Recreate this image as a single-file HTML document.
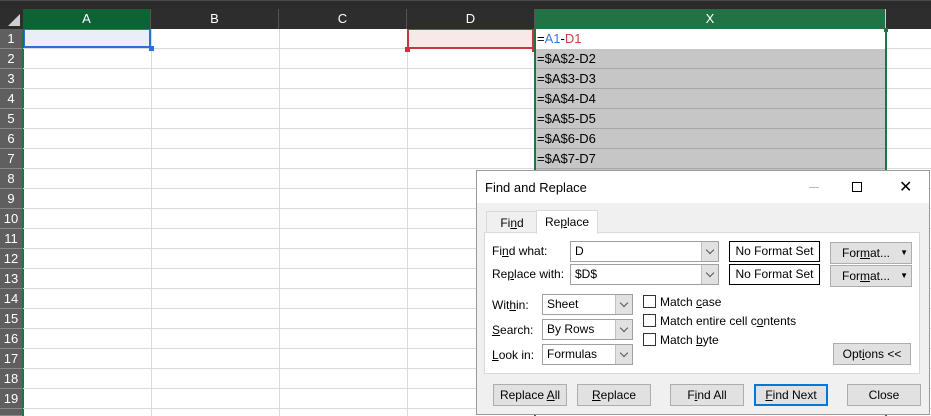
<!DOCTYPE html>
<html style="width:931px;height:416px;overflow:hidden"><head><style>
*{margin:0;padding:0;box-sizing:border-box}
body{width:931px;height:416px;overflow:hidden;background:#fff;font-family:"Liberation Sans","Noto Sans CJK SC",sans-serif;position:relative}
.a{position:absolute}
.topbar{left:0;top:0;width:931px;height:9px;background:#2b2b2b;border-top:1px solid #4a4a4a}
.colh{top:9px;height:20px;background:#2d2d2d;color:#fff;font-size:13px;text-align:center;line-height:20px;border-right:1px solid #555}
.rowh{left:0;width:22px;height:20px;background:#5f5f5f;color:#fff;font-size:13px;text-align:center;line-height:20px;border-bottom:1px solid #888}
.hl{left:23px;width:908px;height:1px;background:#dadada}
.vl{top:29px;width:1px;height:387px;background:#dadada}
.xc{left:536px;width:350px;height:20px;background:#c6c6c6;border-bottom:1px solid #a8a8a8;font-size:13px;line-height:20px;padding-left:1px;color:#000}
.dlg{left:476px;top:170px;width:454px;height:245px;background:#f0f0f0;border:1px solid #999;font-size:12px;color:#000}
.lbl{font-size:12px}
.inp{background:#fff;border:1px solid #a0a0a0;height:21px;line-height:19px;padding-left:4px;font-size:12px}
.dd{position:absolute;right:0;top:0;width:17px;height:19px;background:#e1e1e1;border-left:1px solid #c0c0c0}
.dd:after{content:"";position:absolute;left:5px;top:5px;width:5px;height:5px;border-right:1px solid #555;border-bottom:1px solid #555;transform:rotate(45deg)}
.btn{background:#e1e1e1;border:1px solid #adadad;height:22px;text-align:center;line-height:20px;font-size:12px}
.nf{background:#fff;border:1px solid #000;height:21px;text-align:center;line-height:19px;font-size:12px}
.cb{width:13px;height:13px;border:1px solid #333;background:#fff}
u{text-decoration:underline}
</style></head><body>
<div class="a topbar"></div>
<div class="a" style="left:0;top:9px;width:23px;height:20px;background:#2d2d2d"></div>
<div class="a" style="left:8px;top:14px;width:0;height:0;border-left:12px solid transparent;border-bottom:12px solid #cfcfcf"></div>
<div class="a colh" style="left:23px;width:128px;background:#0e6335">A</div>
<div class="a colh" style="left:151px;width:128px">B</div>
<div class="a colh" style="left:279px;width:128px">C</div>
<div class="a colh" style="left:407px;width:128px">D</div>
<div class="a colh" style="left:535px;width:351px;background:#217346;border-right:1px solid #ccc">X</div>
<div class="a colh" style="left:886px;width:45px;border:none"></div>

<div class="a" style="left:0;top:29px;width:23px;height:387px;background:#5f5f5f"></div>
<div class="a" style="left:22px;top:29px;width:2px;height:387px;background:#217346"></div>
<div class="a rowh" style="top:29px">1</div><div class="a rowh" style="top:49px">2</div><div class="a rowh" style="top:69px">3</div><div class="a rowh" style="top:89px">4</div><div class="a rowh" style="top:109px">5</div><div class="a rowh" style="top:129px">6</div><div class="a rowh" style="top:149px">7</div><div class="a rowh" style="top:169px">8</div><div class="a rowh" style="top:189px">9</div><div class="a rowh" style="top:209px">10</div><div class="a rowh" style="top:229px">11</div><div class="a rowh" style="top:249px">12</div><div class="a rowh" style="top:269px">13</div><div class="a rowh" style="top:289px">14</div><div class="a rowh" style="top:309px">15</div><div class="a rowh" style="top:329px">16</div><div class="a rowh" style="top:349px">17</div><div class="a rowh" style="top:369px">18</div><div class="a rowh" style="top:389px">19</div><div class="a rowh" style="top:409px;height:7px;overflow:hidden"></div>
<div class="a hl" style="top:48px"></div><div class="a hl" style="top:68px"></div><div class="a hl" style="top:88px"></div><div class="a hl" style="top:108px"></div><div class="a hl" style="top:128px"></div><div class="a hl" style="top:148px"></div><div class="a hl" style="top:168px"></div><div class="a hl" style="top:188px"></div><div class="a hl" style="top:208px"></div><div class="a hl" style="top:228px"></div><div class="a hl" style="top:248px"></div><div class="a hl" style="top:268px"></div><div class="a hl" style="top:288px"></div><div class="a hl" style="top:308px"></div><div class="a hl" style="top:328px"></div><div class="a hl" style="top:348px"></div><div class="a hl" style="top:368px"></div><div class="a hl" style="top:388px"></div><div class="a hl" style="top:408px"></div>
<div class="a vl" style="left:151px"></div><div class="a vl" style="left:279px"></div><div class="a vl" style="left:407px"></div><div class="a vl" style="left:534px"></div>
<div class="a" style="left:24px;top:29px;width:127px;height:19px;background:#eaeef8;border:2px solid #2f6fd0;border-left:1px solid #2f6fd0;border-top:1px solid #2f6fd0"></div>
<div class="a" style="left:149px;top:46px;width:5px;height:5px;background:#2f6fd0"></div>
<div class="a" style="left:407px;top:29px;width:127px;height:20px;background:#f8e9e9;border:2px solid #c4373d;border-top:1px solid #c4373d"></div>
<div class="a" style="left:405px;top:47px;width:5px;height:5px;background:#c4373d"></div>
<div class="a" style="left:532px;top:47px;width:5px;height:5px;background:#c4373d"></div>
<div class="a" style="left:536px;top:29px;width:350px;height:20px;background:#fff;font-size:13px;line-height:20px;padding-left:1px">=<span style="color:#3c78d8">A1</span>-<span style="color:#d23b3b">D1</span></div>
<div class="a xc" style="top:49px">=$A$2-D2</div>
<div class="a xc" style="top:69px">=$A$3-D3</div>
<div class="a xc" style="top:89px">=$A$4-D4</div>
<div class="a xc" style="top:109px">=$A$5-D5</div>
<div class="a xc" style="top:129px">=$A$6-D6</div>
<div class="a xc" style="top:149px">=$A$7-D7</div>
<div class="a xc" style="top:169px"></div>
<div class="a" style="left:534px;top:29px;width:2px;height:387px;background:#217346"></div>
<div class="a" style="left:885px;top:29px;width:2px;height:387px;background:#217346"></div>
<div class="a" style="left:884px;top:28px;width:4px;height:4px;background:#217346"></div>

<div class="a dlg">
  <div class="a" style="left:0;top:0;width:452px;height:32px;background:#fff"></div>
  <div class="a" style="left:8px;top:9px;font-size:13px">Find and Replace</div>
  <div class="a" style="left:332px;top:16px;width:10px;height:1px;background:#bbb"></div>
  <div class="a" style="left:375px;top:11px;width:10px;height:10px;border:1px solid #000"></div>
  <div class="a" style="left:422px;top:6px;font-size:16px">✕</div>
  <div class="a" style="left:9px;top:40px;width:52px;height:22px;border:1px solid #d9d9d9;border-bottom:none;text-align:center;line-height:22px">Fi<u>n</u>d</div>
  <div class="a" style="left:59px;top:39px;width:62px;height:24px;background:#fff;border:1px solid #d9d9d9;border-bottom:none;text-align:center;line-height:22px;z-index:2">Re<u>p</u>lace</div>
  <div class="a" style="left:7px;top:61px;width:436px;height:142px;background:#fff;border:1px solid #d9d9d9"></div>
  <div class="a lbl" style="left:15px;top:73px">Fi<u>n</u>d what:</div>
  <div class="a lbl" style="left:15px;top:96px">Re<u>p</u>lace with:</div>
  <div class="a inp" style="left:93px;top:70px;width:149px">D<div class="dd"></div></div>
  <div class="a inp" style="left:93px;top:93px;width:149px">$D$<div class="dd"></div></div>
  <div class="a nf" style="left:252px;top:70px;width:91px">No Format Set</div>
  <div class="a nf" style="left:252px;top:93px;width:91px">No Format Set</div>
  <div class="a btn" style="left:353px;top:71px;width:82px;padding-right:10px">For<u>m</u>at... <span style="position:absolute;right:3px;font-size:8px">▼</span></div>
  <div class="a btn" style="left:353px;top:94px;width:82px;padding-right:10px">For<u>m</u>at... <span style="position:absolute;right:3px;font-size:8px">▼</span></div>
  <div class="a lbl" style="left:15px;top:127px">Wit<u>h</u>in:</div>
  <div class="a lbl" style="left:15px;top:152px"><u>S</u>earch:</div>
  <div class="a lbl" style="left:15px;top:177px"><u>L</u>ook in:</div>
  <div class="a inp" style="left:65px;top:123px;width:91px">Sheet<div class="dd"></div></div>
  <div class="a inp" style="left:65px;top:148px;width:91px">By Rows<div class="dd"></div></div>
  <div class="a inp" style="left:65px;top:173px;width:91px">Formulas<div class="dd"></div></div>
  <div class="a cb" style="left:166px;top:124px"></div><div class="a lbl" style="left:183px;top:124px">Match <u>c</u>ase</div>
  <div class="a cb" style="left:166px;top:143px"></div><div class="a lbl" style="left:183px;top:143px">Match entire cell c<u>o</u>ntents</div>
  <div class="a cb" style="left:166px;top:162px"></div><div class="a lbl" style="left:183px;top:162px">Match <u>b</u>yte</div>
  <div class="a btn" style="left:356px;top:172px;width:78px">Opt<u>i</u>ons &lt;&lt;</div>
  <div class="a btn" style="left:16px;top:213px;width:74px">Replace <u>A</u>ll</div>
  <div class="a btn" style="left:100px;top:213px;width:74px"><u>R</u>eplace</div>
  <div class="a btn" style="left:193px;top:213px;width:74px">F<u>i</u>nd All</div>
  <div class="a btn" style="left:277px;top:213px;width:74px;border:2px solid #0078d7;line-height:18px"><u>F</u>ind Next</div>
  <div class="a btn" style="left:370px;top:213px;width:74px">Close</div>
</div>
</body></html>
